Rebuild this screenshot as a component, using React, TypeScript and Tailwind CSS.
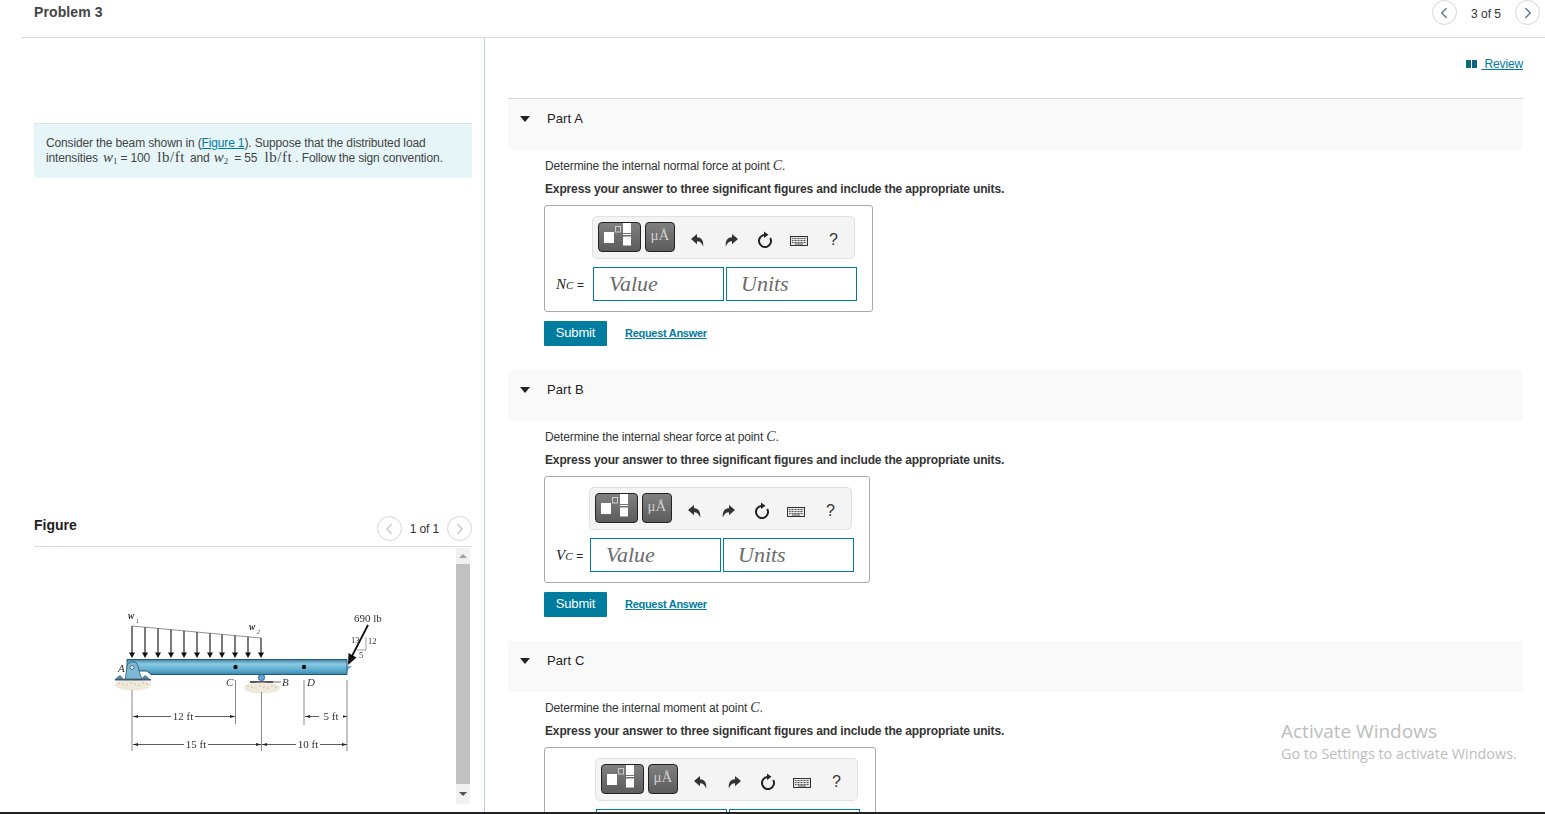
import { ChevronLeft, ChevronRight } from "lucide-react";

const sans = "font-['Liberation_Sans',Arial,sans-serif]";
const serif = "font-['Liberation_Serif','Times_New_Roman',serif]";

function Circle({ dir, faint }: { dir: "left" | "right"; faint?: boolean }) {
  const Icon = dir === "left" ? ChevronLeft : ChevronRight;
  return (
    <div className={`w-[25px] h-[25px] rounded-full border border-[#d6d6d6] bg-white flex items-center justify-center ${faint ? "text-[#c4c4c4]" : "text-[#4d6f8a]"}`}>
      <Icon size={18} strokeWidth={1.6} />
    </div>
  );
}

function Keyboard() {
  return (
    <svg width="18" height="10" viewBox="0 0 18 10">
      <rect x="0.5" y="0.5" width="17" height="9" fill="#e4e4e4" stroke="#333" />
      <path d="M2 2.5h14M2 4.5h14M2 6.5h14" stroke="#555" strokeWidth="1" strokeDasharray="1 0.5" />
      <path d="M5 8h8" stroke="#555" />
    </svg>
  );
}

function Refresh() {
  return (
    <svg width="16" height="18" viewBox="0 0 16 18">
      <path d="M7.5 4A6 6 0 1 0 13.2 7" fill="none" stroke="#222" strokeWidth="2" />
      <path d="M7 0.5L11.5 3.8L7 7z" fill="#222" />
    </svg>
  );
}

function Arrow({ flip }: { flip?: boolean }) {
  return (
    <svg width="13" height="13" viewBox="0 0 13 13" className={flip ? "-scale-x-100" : ""}>
      <path d="M0 5L6 0V3.2C10 3.2 12.8 6 12.2 12.5C10.8 9 9 7.2 6 7.2V10.2z" fill="#333" />
    </svg>
  );
}

function Toolbar({ offset }: { offset: string }) {
  return (
    <div className={`${offset} w-[263px] h-[43px] rounded-[5px] border border-[#e0e0e0] bg-[#f4f4f4] flex items-center pl-[5px] pb-[2px]`}>
      <div className="w-[43px] h-[30px] rounded-[4px] border border-[#222] bg-gradient-to-b from-[#808080] to-[#5c5c5c]">
        <svg width="41" height="28" viewBox="0 0 41 28">
          <rect x="5" y="9" width="10" height="11" fill="#fff" />
          <rect x="16.5" y="3.5" width="5" height="5.5" fill="none" stroke="#ccc" strokeWidth="1" />
          <rect x="24" y="0" width="8" height="10" fill="#fff" />
          <rect x="24" y="11" width="8" height="1" fill="#fff" />
          <rect x="24" y="13.5" width="8" height="9" fill="#fff" />
        </svg>
      </div>
      <div className={`ml-[4px] w-[30px] h-[30px] rounded-[4px] border border-[#222] bg-gradient-to-b from-[#808080] to-[#5c5c5c] flex items-center justify-center text-[#d0d0d0] text-[15px] pb-[3px] ${serif}`}>
        μÅ
      </div>
      <div className="ml-[5px] w-[34px] flex justify-center pt-[7px]"><Arrow /></div>
      <div className="w-[34px] flex justify-center pt-[7px]"><Arrow flip /></div>
      <div className="w-[34px] flex justify-center pt-[6px]"><Refresh /></div>
      <div className="w-[34px] flex justify-center pt-[9px]"><Keyboard /></div>
      <div className="w-[35px] flex justify-center pt-[7px] text-[16px] text-[#333]">?</div>
    </div>
  );
}

function Part({ name, lead, point, symbol, labelWidth, offset }: { name: string; lead: string; point: string; symbol: string; labelWidth: string; offset: string }) {
  return (
    <section>
      <div className={`h-[51px] bg-[#f9f9f9] flex items-start pt-[11px] ${name === "Part A" ? "border-t border-[#d4d4d4] h-[52px]" : ""}`}>
        <div className="ml-[12px] mt-[6px] w-0 h-0 border-l-[5.5px] border-r-[5.5px] border-t-[6px] border-l-transparent border-r-transparent border-t-[#222]" />
        <span className="ml-[17px] text-[13px] tracking-[0.1px] leading-[18px] text-[#222]">{name}</span>
      </div>
      <div className="pl-[36px] pt-[8px] pb-[24px]">
        <p className="h-[15px] leading-[15px] text-[12px] tracking-[-0.14px] text-[#333] pl-[1px]">
          {lead} <i className={`${serif} text-[14px]`}>{point}</i>.
        </p>
        <p className="mt-[8px] h-[15px] leading-[16px] text-[12px] tracking-[-0.14px] font-bold text-[#333] pl-[1px]">
          Express your answer to three significant figures and include the appropriate units.
        </p>
        <div className="mt-[9px] w-fit border border-[#aaa] rounded-[3px] pl-[11px] pr-[15px] pt-[10px] pb-[10px]">
          <Toolbar offset={offset} />
          <div className="mt-[8px] flex items-center">
            <div className={`${labelWidth} text-[15px] text-[#222] ${serif}`}>
              <i>{symbol}</i><i className="text-[11px]">C</i> <span className={`text-[12px] ${sans}`}>=</span>
            </div>
            <div className={`w-[131px] h-[34px] border border-[#007c9e] pl-[15px] leading-[32px] text-[22px] italic text-[#6b6b6b] ${serif}`}>Value</div>
            <div className={`ml-[2px] w-[131px] h-[34px] border border-[#007c9e] pl-[14px] leading-[32px] text-[22px] italic text-[#6b6b6b] ${serif}`}>Units</div>
          </div>
        </div>
        <div className="mt-[9px] flex items-center">
          <div className="w-[63px] h-[25px] bg-[#007c9e] rounded-[1px] text-white text-[13px] tracking-[-0.2px] flex items-center justify-center pb-[2px]">Submit</div>
          <span className="ml-[18px] text-[11px] tracking-[-0.29px] font-bold text-[#007c9e] underline">Request Answer</span>
        </div>
      </div>
    </section>
  );
}

function Dim({ x1, x2, y, label, lx }: { x1: number; x2: number; y: number; label: string; lx: number }) {
  return (
    <g>
      <line x1={x1} x2={x2} y1={y} y2={y} stroke="#333" strokeWidth="0.8" />
      <path d={`M${x1} ${y}l5 -1.5v3z M${x2} ${y}l-5 -1.5v3z`} fill="#222" />
      <rect x={lx - 12} y={y - 5} width="24" height="10" fill="#fff" />
      <text x={lx} y={y + 3.5} textAnchor="middle" fontSize="11" fill="#333" fontFamily="Liberation Serif">{label}</text>
    </g>
  );
}

function Ground({ cx, cy }: { cx: number; cy: number }) {
  const dots = [-14, -10, -6, -2, 2, 6, 10, 14];
  return (
    <g>
      <ellipse cx={cx} cy={cy} rx="18" ry="5.5" fill="#efe9da" />
      {dots.map((d, i) => (
        <circle key={d} cx={cx + d} cy={cy - 2 + (i % 3)} r="0.6" fill="#9a8a6e" />
      ))}
    </g>
  );
}

function Beam() {
  const xs = [32, 45, 58, 71, 84, 97, 110, 122, 135, 148, 161];
  return (
    <svg width="300" height="170" viewBox="0 0 300 170" className="blur-[0.3px] shrink-0">
      <defs>
        <linearGradient id="beam" x1="0" y1="0" x2="0" y2="1">
          <stop offset="0" stopColor="#3c84a8" />
          <stop offset="0.3" stopColor="#8ccae2" />
          <stop offset="0.7" stopColor="#5dacd0" />
          <stop offset="1" stopColor="#3a86ad" />
        </linearGradient>
      </defs>
      <line x1="32" y1="26" x2="161" y2="38" stroke="#777" strokeWidth="0.8" />
      {xs.map((x, i) => (
        <g key={x}>
          <line x1={x} x2={x} y1={26 + i * 1.2} y2={54} stroke="#222" strokeWidth="1.2" />
          <path d={`M${x - 3} 52.5l3 5.5l3 -5.5z`} fill="#111" />
        </g>
      ))}
      <path d="M246 66l6 0l-5 5z" fill="#6cb4d8" />
      <path d="M27 59.5H247V74.5H51L47 71H27z" fill="url(#beam)" stroke="#2a5872" strokeWidth="1" />
      <Ground cx={33} cy={85} />
      <path d="M25 79c2 -6 1 -13 3 -15c3 -3 7 -3 9 0c3 5 1 10 6 15z" fill="#7db8d4" stroke="#2f5f7a" strokeWidth="0.9" />
      <path d="M15 79l5 -4l4 4zM41 79l4 -4l5 4z" fill="#4f829c" />
      <rect x="15" y="79" width="36" height="1.5" fill="#456" />
      <circle cx="32" cy="67.5" r="2" fill="#dfeef5" stroke="#345" strokeWidth="0.7" />
      <circle cx="161.5" cy="77.5" r="3.2" fill="#55a9d0" stroke="#335" strokeWidth="0.6" />
      <rect x="150" y="81" width="23" height="2" fill="#556" />
      <Ground cx={162} cy={88} />
      <circle cx="135.5" cy="67" r="2.2" fill="#111" />
      <circle cx="204" cy="67" r="2.2" fill="#111" />
      <path d="M173 82h8" stroke="#444" strokeWidth="0.8" />
      <g stroke="#555" strokeWidth="0.7">
        <line x1="32" x2="32" y1="90" y2="151" />
        <line x1="135.5" x2="135.5" y1="80" y2="124" />
        <line x1="161.5" x2="161.5" y1="92" y2="151" />
        <line x1="204" x2="204" y1="80" y2="125" />
        <line x1="247" x2="247" y1="80" y2="151" />
      </g>
      <Dim x1={33} x2={135} y={116.5} label="12 ft" lx={83} />
      <Dim x1={205} x2={247} y={116.5} label="5 ft" lx={231} />
      <Dim x1={33} x2={161} y={144.5} label="15 ft" lx={96} />
      <Dim x1={162} x2={247} y={144.5} label="10 ft" lx={208} />
      <line x1="268" y1="25" x2="251" y2="58" stroke="#111" strokeWidth="1.8" />
      <path d="M248 65l0.5 -12l8 4.5z" fill="#111" />
      <path d="M266 37v13h-9" fill="none" stroke="#777" strokeWidth="0.7" />
      <g fontFamily="Liberation Serif" fill="#333">
        <text x="254" y="22" fontSize="11">690 lb</text>
        <text x="251" y="43" fontSize="8.5">13</text>
        <text x="268" y="44" fontSize="8.5">12</text>
        <text x="259" y="58" fontSize="8.5">5</text>
        <g fontStyle="italic">
          <text x="28" y="19" fontSize="9.5" fontWeight="bold">w</text>
          <text x="36" y="23" fontSize="6">1</text>
          <text x="149" y="30" fontSize="9.5" fontWeight="bold">w</text>
          <text x="157" y="34" fontSize="6">2</text>
          <text x="18" y="72" fontSize="11">A</text>
          <text x="126" y="86" fontSize="11">C</text>
          <text x="182" y="86" fontSize="11">B</text>
          <text x="207" y="86" fontSize="11">D</text>
        </g>
      </g>
    </svg>
  );
}

function W({ n, space }: { n: string; space: string }) {
  return (
    <span className={`${serif} ${space} text-[15px] leading-none`}>
      <i>w</i><sub className="text-[9px] leading-none">{n}</sub>
    </span>
  );
}

function Unit({ space }: { space: string }) {
  return <span className={`${serif} ${space} text-[15px] tracking-[0.5px] leading-none`}>lb/ft</span>;
}

export default function App() {
  return (
    <div className={`relative h-[814px] overflow-hidden bg-white flex flex-col text-[#333] ${sans}`}>
      <header className="ml-[22px] h-[38px] shrink-0 border-b border-[#dcdcdc] flex items-start justify-between">
        <div className="ml-[12px] mt-[2px] text-[14px] tracking-[0.1px] font-bold text-[#444]">Problem 3</div>
        <div className="flex items-center mr-[5px] text-[12px] text-[#333]">
          <Circle dir="left" />
          <span className="mx-[14px] pt-[2px]">3 of 5</span>
          <Circle dir="right" />
        </div>
      </header>

      <main className="flex-1 flex min-h-0">
        <div className="w-[485px] shrink-0 border-r border-[#bdd2e6] pl-[34px] flex flex-col">
          <div className="mt-[85px] w-[438px] h-[55px] bg-[#e6f5f7] border-t border-[#d8e2e6] pl-[12px] pt-[12px] text-[12px] tracking-[-0.14px] leading-[15px] text-[#444]">
            <div className="h-[15px]">Consider the beam shown in (<span className="text-[#007c9e] underline">Figure 1</span>). Suppose that the distributed load</div>
            <div className="h-[15px] mt-[-1px] whitespace-nowrap">
              intensities <W n="1" space="ml-[2px]" /> = 100 <Unit space="ml-[4px] mr-[2px]" /> and <W n="2" space="ml-[1px] mr-[3px]" /> = 55 <Unit space="ml-[4px]" /> . Follow the sign convention.
            </div>
          </div>
          <div className="mt-[333px] w-[438px] h-[36px] border-b border-[#dcdcdc] flex items-start justify-between">
            <span className="mt-[4px] text-[14px] font-bold text-[#222]">Figure</span>
            <div className="flex items-center mt-[5px] text-[12px] tracking-[-0.14px]">
              <Circle dir="left" faint />
              <span className="mx-[8px]">1 of 1</span>
              <Circle dir="right" faint />
            </div>
          </div>
          <div className="flex-1 min-h-0 w-[436px] flex justify-between overflow-hidden">
            <div className="ml-[66px] mt-[53px]"><Beam /></div>
            <div className="w-[14px] mt-[1px] mb-[8px] bg-[#f1f1f1] flex flex-col items-center">
              <div className="h-[16px] flex items-center justify-center">
                <div className="w-0 h-0 border-l-[4px] border-r-[4px] border-b-[4px] border-l-transparent border-r-transparent border-b-[#a0a0a0]" />
              </div>
              <div className="w-full h-[220px] bg-[#c1c1c1]" />
              <div className="flex-1 flex items-center justify-center">
                <div className="w-0 h-0 border-l-[4px] border-r-[4px] border-t-[4px] border-l-transparent border-r-transparent border-t-[#505050]" />
              </div>
            </div>
          </div>
        </div>

        <div className="flex-1 min-w-0 pl-[23px] pr-[22px] overflow-hidden">
          <div className="h-[60px] flex justify-end pt-[19px]">
            <span className="flex items-center h-[14px] text-[12px] tracking-[-0.14px] text-[#007c9e]">
              <svg width="11" height="8" viewBox="0 0 11 8" className="mr-[4px]"><path d="M0 0h5v8H0zM6 0h5v8H6z" fill="#0f6480" /></svg>
              <span className="underline whitespace-pre"> Review</span>
            </span>
          </div>
          <Part name="Part A" lead="Determine the internal normal force at point" point="C" symbol="N" labelWidth="w-[37px]" offset="ml-[36px]" />
          <Part name="Part B" lead="Determine the internal shear force at point" point="C" symbol="V" labelWidth="w-[34px]" offset="ml-[33px]" />
          <Part name="Part C" lead="Determine the internal moment at point" point="C" symbol="M" labelWidth="w-[40px]" offset="ml-[39px]" />
        </div>
      </main>

      <div className="h-[2px] shrink-0 bg-[#222]" />

      <div className="absolute left-[1281px] top-[718px] font-['Open_Sans',sans-serif] text-[#bdbdbd] pointer-events-none">
        <div className="text-[19px] leading-[26px]">Activate Windows</div>
        <div className="text-[14.4px] leading-[20px]">Go to Settings to activate Windows.</div>
      </div>
    </div>
  );
}
